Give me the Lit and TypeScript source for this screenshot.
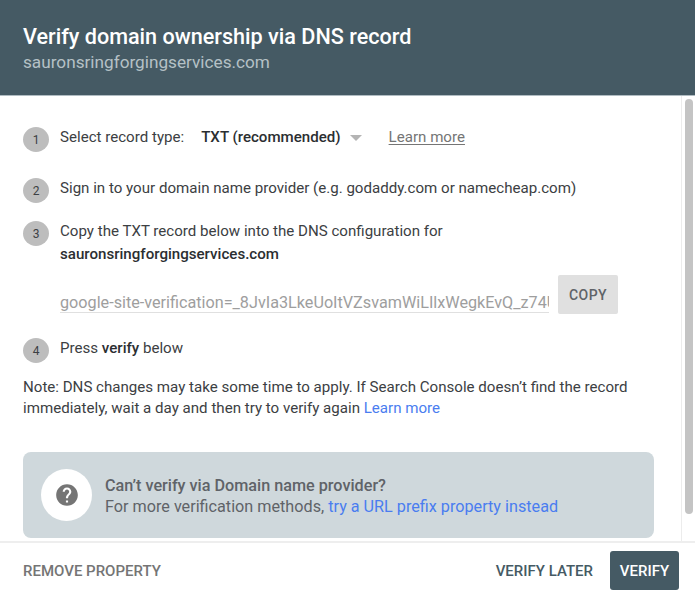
import { LitElement, html, css } from "lit";
import { customElement } from "lit/decorators.js";

@customElement("app-root")
export class AppRoot extends LitElement {
  static styles = css`
    :host { display: flex; flex-direction: column; width: 695px; height: 600px; overflow: hidden; background: #fff; font-family: Roboto, sans-serif; color: #3c4043; font-size: 15.1px; }
    a { color: #4a7df0; text-decoration: none; }
    b { font-weight: 500; color: #2b2e31; }
    .header { flex: none; height: 96px; box-sizing: border-box; background: #455a64; padding: 23px 23px 0; border-bottom: 1px solid #b0bcc2; }
    .title { font-size: 21.6px; line-height: 27px; color: #fff; font-weight: 500; }
    .sub { font-size: 17.2px; line-height: 24px; color: #b5c1c6; }
    .middle { flex: 1; min-height: 0; display: flex; }
    .content { flex: 1; min-width: 0; box-sizing: border-box; padding: 31px 27px 0 23px; overflow: hidden; display: flex; flex-direction: column; }
    .scroll { flex: none; width: 14px; box-sizing: border-box; border-left: 1px solid #ececec; padding: 3px 2px 0 3px; }
    .thumb { height: 415px; background: #c4c4c4; border-radius: 5px; }
    .step { display: flex; gap: 11px; }
    .num { flex: none; width: 26px; height: 25px; border-radius: 50%; background: #bdbdbd; display: flex; align-items: center; justify-content: center; font-size: 12px; color: #3c4043; }
    .txt { line-height: 23px; margin-top: -1px; }
    .s1 .txt { display: flex; align-items: center; margin-top: -4px; }
    .sel { margin-left: 17px; font-weight: 500; color: #2b2e31; }
    .caret { margin-left: 9px; margin-right: 27px; width: 0; height: 0; border-left: 6px solid transparent; border-right: 6px solid transparent; border-top: 6px solid #b4b4b4; }
    .lm { color: #757575; text-decoration: underline; text-underline-offset: 2px; }
    .s2 { margin-top: 26px; }
    .s3 { margin-top: 18px; }
    .record { display: flex; align-items: flex-end; gap: 9px; margin: 9px 0 0 37px; }
    .value { width: 489px; margin-bottom: 1px; white-space: nowrap; overflow: hidden; color: #9e9e9e; font-size: 16.2px; line-height: 18px; border-bottom: 1px solid #e0e0e0; }
    .copy { flex: none; width: 60px; height: 39px; display: flex; align-items: center; justify-content: center; background: #e0e0e0; color: #5f6368; font-size: 14px; font-weight: 500; letter-spacing: 0.4px; border-radius: 2px; }
    .s4 { margin-top: 24px; }
    .note { margin-top: 14px; line-height: 21px; margin-right: -6px; }
    .help { margin-top: 33px; flex: none; height: 86px; box-sizing: border-box; background: #cfd8dc; border-radius: 8px; display: flex; align-items: center; gap: 13px; padding: 0 18px; color: #5f6368; font-size: 16.2px; line-height: 21px; }
    .help b { color: #5f6368; }
    .help-text { margin-top: 2px; }
    .circle { flex: none; width: 51px; height: 52px; border-radius: 50%; background: #fff; display: flex; align-items: center; justify-content: center; }
    .footer { flex: none; height: 59px; box-sizing: border-box; border-top: 2px solid #eeeeee; display: flex; align-items: center; padding: 0 16px 2px 23px; font-size: 15px; font-weight: 500; }
    .remove { color: #757575; }
    .later { margin-left: auto; color: #455a64; }
    .verify { margin-left: 17px; height: 39px; width: 69px; display: flex; align-items: center; justify-content: center; background: #455a64; color: #fff; border-radius: 3px; }
  `;

  render() {
    return html`
      <div class="header">
        <div class="title">Verify domain ownership via DNS record</div>
        <div class="sub">sauronsringforgingservices.com</div>
      </div>
      <div class="middle">
        <div class="content">
          <div class="step s1">
            <div class="num">1</div>
            <div class="txt">Select record type: <span class="sel">TXT (recommended)</span><span class="caret"></span><span class="lm">Learn more</span></div>
          </div>
          <div class="step s2">
            <div class="num">2</div>
            <div class="txt">Sign in to your domain name provider (e.g. godaddy.com or namecheap.com)</div>
          </div>
          <div class="step s3">
            <div class="num">3</div>
            <div class="txt">Copy the TXT record below into the DNS configuration for<br /><b>sauronsringforgingservices.com</b></div>
          </div>
          <div class="record">
            <div class="value">google-site-verification=_8JvIa3LkeUoItVZsvamWiLIlxWegkEvQ_z74U</div>
            <div class="copy">COPY</div>
          </div>
          <div class="step s4">
            <div class="num">4</div>
            <div class="txt">Press <b>verify</b> below</div>
          </div>
          <div class="note">Note: DNS changes may take some time to apply. If Search Console doesn’t find the record immediately, wait a day and then try to verify again <a>Learn more</a></div>
          <div class="help">
            <div class="circle">
              <svg width="26" height="26" viewBox="0 0 24 24" fill="#757575"><path d="M12 2C6.48 2 2 6.48 2 12s4.48 10 10 10 10-4.48 10-10S17.52 2 12 2zm1 17h-2v-2h2v2zm2.07-7.75l-.9.92C13.45 12.9 13 13.5 13 15h-2v-.5c0-1.1.45-2.1 1.17-2.83l1.24-1.26c.37-.36.59-.86.59-1.41 0-1.1-.9-2-2-2s-2 .9-2 2H8c0-2.21 1.79-4 4-4s4 1.79 4 4c0 .88-.36 1.68-.93 2.25z"/></svg>
            </div>
            <div class="help-text">
              <div><b>Can’t verify via Domain name provider?</b></div>
              <div>For more verification methods, <a>try a URL prefix property instead</a></div>
            </div>
          </div>
        </div>
        <div class="scroll"><div class="thumb"></div></div>
      </div>
      <div class="footer">
        <span class="remove">REMOVE PROPERTY</span>
        <span class="later">VERIFY LATER</span>
        <span class="verify">VERIFY</span>
      </div>
    `;
  }
}
